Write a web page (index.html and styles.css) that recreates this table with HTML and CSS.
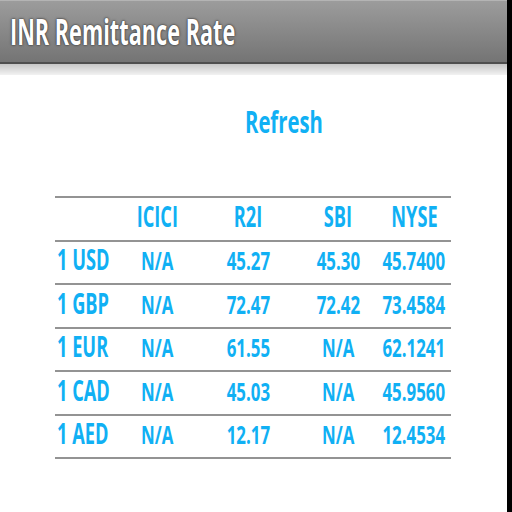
FILE: index.html
```html
<!DOCTYPE html>
<html>
<head>
<meta charset="utf-8">
<link rel="stylesheet" href="styles.css">
</head>
<body>
<div class="screen">
  <header class="titlebar">
    <span class="sq sq-left title">INR Remittance Rate</span>
  </header>
  <div class="shade"></div>
  <div class="refresh-wrap">
    <span class="sq sq-left refresh">Refresh</span>
  </div>
  <div class="rates">
    <div class="row head">
      <div class="cell label"></div>
      <div class="cell"><span class="sq big">ICICI</span></div>
      <div class="cell"><span class="sq big">R2I</span></div>
      <div class="cell"><span class="sq big">SBI</span></div>
      <div class="cell"><span class="sq big">NYSE</span></div>
    </div>
    <div class="row">
      <div class="cell label"><span class="sq sq-left big">1 USD</span></div>
      <div class="cell"><span class="sq val">N/A</span></div>
      <div class="cell"><span class="sq val">45.27</span></div>
      <div class="cell"><span class="sq val">45.30</span></div>
      <div class="cell"><span class="sq val">45.7400</span></div>
    </div>
    <div class="row">
      <div class="cell label"><span class="sq sq-left big">1 GBP</span></div>
      <div class="cell"><span class="sq val">N/A</span></div>
      <div class="cell"><span class="sq val">72.47</span></div>
      <div class="cell"><span class="sq val">72.42</span></div>
      <div class="cell"><span class="sq val">73.4584</span></div>
    </div>
    <div class="row">
      <div class="cell label"><span class="sq sq-left big">1 EUR</span></div>
      <div class="cell"><span class="sq val">N/A</span></div>
      <div class="cell"><span class="sq val">61.55</span></div>
      <div class="cell"><span class="sq val">N/A</span></div>
      <div class="cell"><span class="sq val">62.1241</span></div>
    </div>
    <div class="row">
      <div class="cell label"><span class="sq sq-left big">1 CAD</span></div>
      <div class="cell"><span class="sq val">N/A</span></div>
      <div class="cell"><span class="sq val">45.03</span></div>
      <div class="cell"><span class="sq val">N/A</span></div>
      <div class="cell"><span class="sq val">45.9560</span></div>
    </div>
    <div class="row">
      <div class="cell label"><span class="sq sq-left big">1 AED</span></div>
      <div class="cell"><span class="sq val">N/A</span></div>
      <div class="cell"><span class="sq val">12.17</span></div>
      <div class="cell"><span class="sq val">N/A</span></div>
      <div class="cell"><span class="sq val">12.4534</span></div>
    </div>
  </div>
</div>
</body>
</html>
```
FILE: styles.css
```css
html, body {
  margin: 0;
  padding: 0;
}
body {
  background: #000;
  font-family: "Open Sans", "DejaVu Sans", sans-serif;
  font-weight: 700;
}
.screen {
  width: 507px;
  height: 512px;
  background: #fff;
  overflow: hidden;
}
.titlebar {
  box-sizing: border-box;
  border-top: 1px solid #b4b4b4;
  border-bottom: 2px solid #4e4e4e;
  height: 64px;
  background: linear-gradient(#9c9c9c, #747474);
  display: flex;
  align-items: center;
  padding-left: 10px;
}
.shade {
  height: 11px;
  background: linear-gradient(#c6c6c6, #f2f2f2);
}
.sq {
  display: inline-block;
  white-space: nowrap;
  line-height: 1;
  transform-origin: center;
}
.sq-left {
  transform-origin: left center;
}
.title {
  color: #fff;
  font-size: 35px;
  transform: scaleX(0.62);
  text-shadow: 0 0 3px #3a3a3a, 0 0 2px #3a3a3a;
  margin-top: -1px;
}
.refresh-wrap {
  padding-top: 31px;
  padding-left: 245px;
  height: 31px;
}
.refresh {
  color: #10b0f4;
  font-size: 31px;
  transform: scaleX(0.654);
}
.rates {
  margin: 59px 0 0 55px;
  width: 396px;
  border-top: 2px solid #939393;
}
.row {
  display: grid;
  grid-template-columns: 62px 80px 102px 78px 74px;
  align-items: baseline;
  height: 43.5px;
  box-sizing: border-box;
  padding-top: 3.5px;
  border-bottom: 2px solid #939393;
  color: #10b0f4;
}
.cell {
  display: flex;
  justify-content: center;
  align-items: baseline;
}
.cell.label {
  justify-content: flex-start;
  padding-left: 2px;
}
.big {
  font-size: 29.4px;
  transform: scaleX(0.62);
}
.sq-left.big {
  transform-origin: left center;
}
.val {
  font-size: 25.2px;
  transform: scaleX(0.67);
}
```
